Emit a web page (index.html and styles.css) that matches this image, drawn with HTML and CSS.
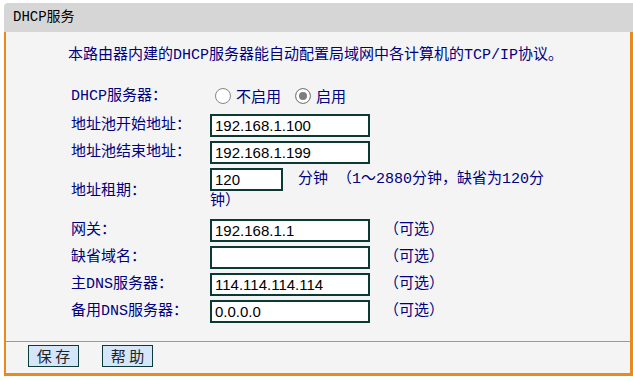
FILE: index.html
```html
<!DOCTYPE html>
<html lang="zh-CN">
<head>
  <meta charset="UTF-8" />
  <title>DHCP服务</title>
  <link rel="stylesheet" href="styles.css">
</head>
<body>

<div class="panel">
  <div class="panel-title">DHCP服务</div>
  <div class="panel-body">
    <p class="desc">本路由器内建的DHCP服务器能自动配置局域网中各计算机的TCP/IP协议。</p>

    <div class="form">
      <div class="label">DHCP服务器：</div>
      <div class="field radios">
        <label><input type="radio" name="dhcp" />不启用</label>
        <label><input type="radio" name="dhcp" checked />启用</label>
      </div>

      <div class="label">地址池开始地址：</div>
      <div class="field"><input type="text" value="192.168.1.100" /></div>
      <div class="note"></div>

      <div class="label">地址池结束地址：</div>
      <div class="field"><input type="text" value="192.168.1.199" /></div>
      <div class="note"></div>

      <div class="label">地址租期：</div>
      <div class="field lease"><input type="text" class="short" value="120" />分钟&nbsp;（1～2880分钟，缺省为120分钟）</div>

      <div class="label">网关：</div>
      <div class="field"><input type="text" value="192.168.1.1" /></div>
      <div class="note">（可选）</div>

      <div class="label">缺省域名：</div>
      <div class="field"><input type="text" value="" /></div>
      <div class="note">（可选）</div>

      <div class="label">主DNS服务器：</div>
      <div class="field"><input type="text" value="114.114.114.114" /></div>
      <div class="note">（可选）</div>

      <div class="label">备用DNS服务器：</div>
      <div class="field"><input type="text" value="0.0.0.0" /></div>
      <div class="note">（可选）</div>
    </div>

    <div class="buttons">
      <button type="button">保 存</button>
      <button type="button">帮 助</button>
    </div>
  </div>
</div>

</body>
</html>
```

FILE: styles.css
```css
body {
  margin: 3px 0 0 4px;
  background: #fff;
  font-family: "Liberation Mono", "Noto Sans CJK SC", monospace;
  font-size: 15px;
  color: #000080;
}

/* --- Kasten --- */
.panel-title {
  height: 29px;
  line-height: 29px;
  padding-left: 9px;
  background: #d6d6d6;
  border-top-left-radius: 4px;
  color: #000;
  font-size: 14px;
}
.panel-body {
  background: #f4f4f4;
  border-left: 2px solid #e88a1e;
  border-right: 3px solid #e88a1e;
  border-bottom: 3px solid #e88a1e;
  padding-top: 14px;
}
.desc {
  margin: 0 0 0 62px;
  line-height: 20px;
}

/* --- Formular --- */
.form {
  display: grid;
  grid-template-columns: 139px 160px 1fr;
  row-gap: 4px;
  align-items: center;
  margin: 18px 0 0 65px;
  padding-bottom: 18px;
}
.label {
  line-height: 20px;
}
.note {
  padding-left: 14px;
  line-height: 20px;
}
.radios {
  grid-column: 2 / 4;
  display: flex;
  align-items: center;
  height: 23px;
  margin-bottom: 3px;
  padding-left: 5px;
}
.radios label {
  display: flex;
  align-items: center;
  margin-right: 14px;
}
input[type="radio"] {
  appearance: none;
  width: 16px;
  height: 16px;
  margin: 0 5px 0 0;
  border: 1px solid #858585;
  border-radius: 50%;
  background: #fff;
}
input[type="radio"]:checked {
  background: #7d7d7d;
  box-shadow: inset 0 0 0 3px #fff;
}
input[type="text"] {
  display: block;
  box-sizing: border-box;
  width: 160px;
  height: 23px;
  margin: 0;
  padding: 0 3px;
  border: 2px solid #0b3a35;
  background: #fff;
  font-family: "Liberation Sans", Arial, sans-serif;
  font-size: 15px;
  color: #000;
}
.lease {
  grid-column: 2 / 4;
  width: 338px;
  line-height: 22px;
  padding-bottom: 2px;
}
.lease input.short {
  display: inline-block;
  width: 73px;
  margin-right: 15px;
  vertical-align: middle;
}

/* --- Knöpfe unten --- */
.buttons {
  border-top: 1px solid #e88a1e;
  padding: 3px 0 6px 22px;
}
.buttons button {
  width: 51px;
  height: 22px;
  margin: 0 14px 0 0;
  padding: 0;
  border: 1px solid #0b3a3a;
  background: #d5e5fa;
  color: #222;
  font-family: "Noto Sans CJK SC", sans-serif;
  font-size: 15px;
  line-height: 20px;
}
```
